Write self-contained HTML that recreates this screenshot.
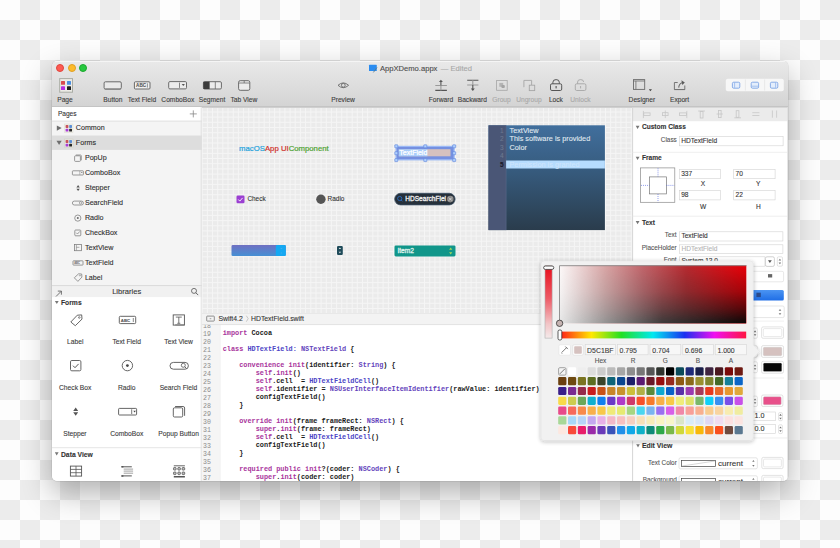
<!DOCTYPE html>
<html><head><meta charset="utf-8">
<style>
html,body{margin:0;padding:0}
body{width:840px;height:548px;overflow:hidden;position:relative;
 background:repeating-conic-gradient(#ececec 0 25%,#fdfdfd 0 50%) 0 0/40px 40px;
 font-family:"Liberation Sans",sans-serif;color:#222}
.a{position:absolute}
#win{position:absolute;left:52px;top:61px;width:736px;height:420px;border-radius:5px;overflow:hidden;
 background:#f2f2f2;box-shadow:0 12px 30px rgba(0,0,0,.3),0 0 0 .5px rgba(0,0,0,.12)}
#pg{left:-52px;top:-61px;width:840px;height:548px}
#tb{left:52px;top:61px;width:736px;height:45.5px;background:linear-gradient(#e9e9e9,#d4d4d4);border-bottom:1px solid #c4c4c4;box-sizing:border-box}
.tl{width:6.4px;height:6.4px;border-radius:50%}
#left{left:52px;top:106.5px;width:149.5px;height:375px;background:#f4f4f4;border-right:1px solid #d8d8d8;box-sizing:border-box}
#canvas{left:201.5px;top:106.5px;width:431px;height:206px;background-color:#ededed;
 background-image:linear-gradient(90deg,rgba(255,255,255,.75) 1px,transparent 1px),linear-gradient(rgba(255,255,255,.75) 1px,transparent 1px);
 background-size:5px 5px;background-position:1px 0}
#code{left:201.5px;top:312.5px;width:431px;height:169px;background:#fff}
#insp{left:632px;top:106.5px;width:156px;height:375px;background:#fff;border-left:1px solid #d4d4d4;box-sizing:border-box}
</style></head><body>
<div id="win"><div id="pg" class="a">
 <div id="tb" class="a"></div>
 <div class="a" style="left:52px;top:61px;width:736px;height:1px;background:rgba(255,255,255,.55)"></div>
 <div class="a tl" style="left:56.1px;top:63.9px;background:#fd5b53;border:.5px solid #e0443c"></div>
 <div class="a tl" style="left:67.5px;top:63.9px;background:#fdbb2c;border:.5px solid #dfa023"></div>
 <div class="a tl" style="left:78.9px;top:63.9px;background:#27c83f;border:.5px solid #1ca82f"></div>
 <svg class="a" style="left:0;top:0" width="840" height="110" viewBox="0 0 840 110">
  <g font-family="Liberation Sans" font-size="6.65" fill="#3c3c3c" text-anchor="middle">
   <text x="65" y="102" stroke="#3c3c3c" stroke-width=".1">Page</text>
   <text x="112.9" y="102" stroke="#3c3c3c" stroke-width=".1">Button</text>
   <text x="142" y="102" stroke="#3c3c3c" stroke-width=".1">Text Field</text>
   <text x="177.8" y="102" stroke="#3c3c3c" stroke-width=".1">ComboBox</text>
   <text x="212" y="102" stroke="#3c3c3c" stroke-width=".1">Segment</text>
   <text x="243.9" y="102" stroke="#3c3c3c" stroke-width=".1">Tab View</text>
   <text x="343.1" y="102" stroke="#3c3c3c" stroke-width=".1">Preview</text>
   <text x="441" y="102" stroke="#3c3c3c" stroke-width=".1">Forward</text>
   <text x="472.3" y="102" stroke="#3c3c3c" stroke-width=".1">Backward</text>
   <text x="501.5" y="102" fill="#a8a8a8" stroke="#a8a8a8" stroke-width=".1">Group</text>
   <text x="528.9" y="102" fill="#a8a8a8" stroke="#a8a8a8" stroke-width=".1">Ungroup</text>
   <text x="555.9" y="102" stroke="#3c3c3c" stroke-width=".1">Lock</text>
   <text x="580.4" y="102" fill="#a8a8a8" stroke="#a8a8a8" stroke-width=".1">Unlock</text>
   <text x="641.9" y="102" stroke="#3c3c3c" stroke-width=".1">Designer</text>
   <text x="679.6" y="102" stroke="#3c3c3c" stroke-width=".1">Export</text>
  </g>
  <g font-family="Liberation Sans" font-size="7.6" text-anchor="start">
   <text x="380" y="71.2" fill="#4a4a4a" stroke="#4a4a4a" stroke-width=".1">AppXDemo.appx</text><text x="440.8" y="71.2" fill="#a6a6a6" stroke="#a6a6a6" stroke-width=".1">— Edited</text>
  </g>
  <rect x="369" y="64.8" width="7.8" height="6.2" rx=".6" fill="#2a8cf0"/>
  <path d="M373.4 72.4 l3.6 -5" stroke="#5a7a8a" stroke-width=".9"/>
  <!-- page icon -->
  <rect x="59.7" y="78.6" width="12.8" height="13.6" fill="#ecebe6" stroke="#a9aca4" stroke-width="1"/>
  <rect x="61" y="81" width="4" height="3.8" rx=".6" fill="#d94a4e"/>
  <rect x="67" y="81" width="4" height="3.8" rx=".6" fill="#4a8ee0"/>
  <rect x="61" y="86.3" width="4" height="3.8" rx=".6" fill="#b42ee0"/>
  <rect x="67" y="86.3" width="4" height="3.8" rx=".6" fill="#1e1e1e"/>
  <g fill="none" stroke="#6a6a6a" stroke-width="1">
   <!-- button -->
   <rect x="104.1" y="81.8" width="17.2" height="7.2" rx="1.3" fill="#e9e9e9"/>
   <path d="M104.6 89.2 h16.2" stroke="#6a6a6a" stroke-width=".6"/>
   <!-- textfield -->
   <rect x="134.4" y="81.8" width="15.6" height="7.2" rx="1" fill="#f0f0f0"/>
   <path d="M147.4 83.3 v4.3" stroke-width=".7"/>
   <!-- combobox -->
   <rect x="168.7" y="81.6" width="17.8" height="7.3" rx="1.2" fill="#ececec"/>
   <path d="M179.5 82.6 v5.3" stroke-width=".8"/>
   <!-- segment -->
   <rect x="203.4" y="81.7" width="18" height="7.3" rx="1.2" fill="#ececec"/>
   <path d="M209.2 81.7 v7.3 M215.3 81.7 v7.3" stroke-width=".8"/>
   <!-- tab view -->
   <rect x="238.6" y="80.7" width="11.2" height="9.6" rx="1.6" fill="#ececec"/>
   <path d="M238.6 83 h11.2 M244.2 80.7 v2.3" stroke-width=".8"/>
   <!-- eye -->
   <path d="M338 85.3 q5.3 -4.8 10.6 0 q-5.3 4.8 -10.6 0z" stroke-width=".9"/>
   <circle cx="343.3" cy="85.3" r="1.9" stroke-width=".9"/>
   <!-- designer -->
   <rect x="633.5" y="79.6" width="11.2" height="9.8" stroke-width=".9"/>
   <path d="M633.5 81 h11.2 M635.9 81 v8.4" stroke-width=".8"/>
   <!-- export -->
   <path d="M677.7 82.5 h-3.3 v7.1 h10.4 v-4.1" stroke-width=".9"/><path d="M674.4 89.5 h10.4" stroke-width=".6"/>
   <path d="M678.7 87.6 q0.3 -3.9 3.4 -4.9" stroke-width="1.1"/><path d="M681.4 80.2 l3.4 2.2 l-2.5 2.6z" fill="#5a5a5a" stroke="none"/>
   <!-- lock -->
   <rect x="550.5" y="83.8" width="11.2" height="6.7" rx="1.4" stroke="#555" stroke-width="1"/>
   <path d="M552.9 83.8 v-1.6 q0 -2.6 3.2 -2.6 q3.2 0 3.2 2.6 v1.6" stroke="#555" stroke-width="1"/>
  </g>
  <path d="M556.1 86 v2.4" stroke="#444" stroke-width="1"/>
  <g fill="none" stroke="#a6a6a6" stroke-width=".9">
   <rect x="575.3" y="83.8" width="10.6" height="6.7" rx="1.4"/>
   <path d="M577.6 83.8 v-1.8 q0 -2.4 3 -2.4 q3 0 3 2.4"/>
   <rect x="496.6" y="80.4" width="10.6" height="9.9" stroke-width=".8"/>
   <rect x="499.3" y="82.9" width="3.9" height="3.9" fill="#b4b4b4" stroke="none"/>
   <rect x="501.4" y="85" width="3.4" height="3" rx="1" fill="#a4a4a4" stroke="none"/>
   <path d="M523.9 87.2 v-6.8 h7.7 v4.6"/>
   <rect x="529.3" y="85.2" width="5.4" height="5.4"/>
  </g>
  <path d="M580.6 86 v2.4" stroke="#a6a6a6" stroke-width=".9"/>
  <text x="136.1" y="87.4" font-family="Liberation Sans" font-weight="bold" font-size="4.6" fill="#555" stroke="#555" stroke-width=".1">ABC</text>
  <path d="M181.7 84 h3.2 l-1.6 2z" fill="#555"/>
  <rect x="203.4" y="81.7" width="6" height="7.3" fill="#3c3c3c"/>
  <path d="M648.8 89.3 h3.2 l-1.6 1.9z" fill="#444"/>
  <!-- forward/backward -->
  <g stroke-width="1.1" fill="none">
   <path d="M435.3 90.4 h11.6" stroke="#555"/>
   <path d="M435.3 85.5 h11.6" stroke="#9a9a9a"/>
   <path d="M440.9 81.5 v4" stroke="#555"/>
   <path d="M440.9 85.5 v4.9" stroke="#9a9a9a"/>
   <path d="M467.2 80.2 h11.2" stroke="#555"/>
   <path d="M467.2 85 h11.2" stroke="#9a9a9a"/>
   <path d="M472.8 80.2 v4.8" stroke="#9a9a9a"/>
   <path d="M472.8 85 v4" stroke="#555"/>
  </g>
  <path d="M438.9 82 l2 -2.3 l2 2.3z" fill="#555"/>
  <path d="M470.8 88.6 l2 2.3 l2 -2.3z" fill="#555"/>
  <!-- segmented -->
  <rect x="725.8" y="78.8" width="58" height="12.4" rx="2" fill="#f7f7f7"/>
  <path d="M745.4 79.5 v11 M764.6 79.5 v11" stroke="#e2e2e2" stroke-width=".7"/>
  <g fill="#e4eefc" stroke="#6e9ae2" stroke-width=".8">
   <rect x="732.4" y="82.2" width="7.4" height="6" rx="1.3"/>
   <rect x="751.2" y="82.2" width="7.4" height="6" rx="1.3"/>
   <rect x="770.4" y="82.2" width="7.4" height="6" rx="1.3"/>
  </g>
  <path d="M734.6 82.7 v5 M751.7 86.2 h6.4 M775.6 82.7 v5" stroke="#7aa2e4" stroke-width=".6"/>
 </svg>

 <svg class="a" style="left:52px;top:106.5px" width="150" height="375" viewBox="52 106.5 150 375">
  <rect x="52" y="106.5" width="150" height="14" fill="#ffffff"/>
  <rect x="52" y="120.3" width="150" height="165" fill="#f4f4f4"/>
  <path d="M52 120.6 h150" stroke="#dcdcdc" stroke-width=".8"/>
  <rect x="52" y="135" width="150" height="14.4" fill="#dddddd"/>
  <path d="M52 285.3 h150" stroke="#d2d2d2" stroke-width="1"/>
  <rect x="52" y="285.8" width="150" height="10.8" fill="#f1f1f1"/>
  <rect x="52" y="296.6" width="150" height="185" fill="#ffffff"/>
  <path d="M52 447.2 h150" stroke="#dedede" stroke-width=".8"/>
  <path d="M201.2 106.5 v375" stroke="#e0e0e0" stroke-width="1"/>
  <g font-family="Liberation Sans" font-size="6.6" fill="#333">
   <text x="57.9" y="115.8" stroke="#333" stroke-width=".1">Pages</text>
  </g>
  <path d="M189.8 113.4 h7 M193.3 109.9 v7" stroke="#888" stroke-width=".8"/>
  <g font-family="Liberation Sans" font-size="7.15" fill="#2e2e2e"><text x="75.8" y="129.35" stroke="#2e2e2e" stroke-width=".1">Common</text><text x="75.8" y="144.35" stroke="#2e2e2e" stroke-width=".1">Forms</text><text x="84.9" y="159.35" stroke="#2e2e2e" stroke-width=".1">PopUp</text><text x="84.9" y="174.35" stroke="#2e2e2e" stroke-width=".1">ComboBox</text><text x="84.9" y="189.35" stroke="#2e2e2e" stroke-width=".1">Stepper</text><text x="84.9" y="204.35" stroke="#2e2e2e" stroke-width=".1">SearchField</text><text x="84.9" y="219.35" stroke="#2e2e2e" stroke-width=".1">Radio</text><text x="84.9" y="234.35" stroke="#2e2e2e" stroke-width=".1">CheckBox</text><text x="84.9" y="249.35" stroke="#2e2e2e" stroke-width=".1">TextView</text><text x="84.9" y="264.35" stroke="#2e2e2e" stroke-width=".1">TextField</text><text x="84.9" y="279.35" stroke="#2e2e2e" stroke-width=".1">Label</text></g>
  <path d="M56.8 124.9 l4.9 2.7 l-4.9 2.7z" fill="#6e6e6e"/>
  <path d="M56.5 140.3 h5.2 l-2.6 4.1z" fill="#6e6e6e"/>
  <g>
   <rect x="64.5" y="123.5" width="8.5" height="8.6" fill="#f0efe8" stroke="#dcdcd0" stroke-width=".5"/>
   <rect x="65.6" y="124.6" width="2.8" height="2.8" rx=".6" fill="#c8565c"/>
   <rect x="69.2" y="124.6" width="2.8" height="2.8" rx=".6" fill="#5a8ed6"/>
   <rect x="65.6" y="128.3" width="2.8" height="2.8" rx=".6" fill="#a83cd8"/>
   <rect x="69.2" y="128.3" width="2.8" height="2.8" rx=".6" fill="#262626"/>
   <rect x="64.5" y="138.5" width="8.5" height="8.6" fill="#e6e6e0" stroke="#cfcfc4" stroke-width=".5"/>
   <rect x="65.6" y="139.6" width="2.8" height="2.8" rx=".6" fill="#c8565c"/>
   <rect x="69.2" y="139.6" width="2.8" height="2.8" rx=".6" fill="#5a8ed6"/>
   <rect x="65.6" y="143.3" width="2.8" height="2.8" rx=".6" fill="#a83cd8"/>
   <rect x="69.2" y="143.3" width="2.8" height="2.8" rx=".6" fill="#262626"/>
  </g>
  <g fill="none" stroke="#7a7a7a" stroke-width=".75">
   <!-- popup -->
   <rect x="74.6" y="155.3" width="5.8" height="5.6" rx=".8"/>
   <path d="M75.8 154.5 h4.6 q.9 0 .9 .9 v4.4"/>
   <!-- combobox -->
   <rect x="72.4" y="170.3" width="11" height="4.2" rx=".6"/>
   <path d="M79.8 170.5 v3.8" stroke-width=".5"/>
   <!-- searchfield -->
   <rect x="72.4" y="200.6" width="11" height="3.9" rx="1.9"/>
   <circle cx="80.6" cy="202.4" r="1.2" stroke-width=".6"/>
   <!-- radio -->
   <circle cx="77.8" cy="217.6" r="3.1"/>
   <!-- checkbox -->
   <rect x="74.8" y="229.5" width="6" height="5.8" rx=".8"/>
   <path d="M76.2 232.2 l1.3 1.3 l2.3 -2.6" stroke-width=".7"/>
   <!-- textview -->
   <rect x="74.5" y="244" width="6.9" height="6.2"/>
   <path d="M76.4 244.5 v5.4 M76.4 246.8 h3" stroke-width=".6"/>
   <!-- textfield -->
   <rect x="73" y="260.3" width="10" height="4.3" rx=".5"/>
   <!-- label -->
   <path d="M74.3 277.3 l4.3 -4 l3.1 .2 l.2 3.1 l-4 4.3z"/>
   <circle cx="79.9" cy="275" r=".6" stroke-width=".5"/>
  </g>
  <path d="M81 171.6 h1.6 l-.8 1z" fill="#555"/>
  <path d="M76.4 186.9 l1.7 -2.3 l1.7 2.3z M76.4 188.3 l1.7 2.3 l1.7 -2.3z" fill="#555"/>
  <circle cx="77.8" cy="217.6" r="1" fill="#666"/>
  <text x="74.2" y="263.8" font-family="Liberation Sans" font-weight="bold" font-size="2.6" fill="#777" stroke="#777" stroke-width=".1">ABC</text>
  <!-- libraries header -->
  <path d="M56 296 l5.2 -5.2 M57.8 290.6 h3.6 v3.6" fill="none" stroke="#555" stroke-width=".8"/>
  <text x="126.7" y="293.4" font-family="Liberation Sans" font-size="7.6" fill="#333" text-anchor="middle" stroke="#333" stroke-width=".1">Libraries</text>
  <circle cx="194" cy="290.4" r="2.5" fill="none" stroke="#555" stroke-width=".8"/>
  <path d="M195.8 292.2 l2.4 2.4" stroke="#555" stroke-width=".9"/>
  <!-- forms section -->
  <path d="M54.9 300.4 h3.8 l-1.9 3.2z" fill="#777"/>
  <text x="61" y="304.8" font-family="Liberation Sans" font-weight="bold" font-size="6.75" fill="#333" stroke="#333" stroke-width=".1">Forms</text>
  <path d="M54.8 451.8 h3.8 l-1.9 3.2z" fill="#777"/>
  <text x="61" y="456.3" font-family="Liberation Sans" font-weight="bold" font-size="6.75" fill="#333" stroke="#333" stroke-width=".1">Data View</text>
  <g font-family="Liberation Sans" font-size="6.7" fill="#3a3a3a" text-anchor="middle">
   <text x="75.2" y="343.30" stroke="#3a3a3a" stroke-width=".1">Label</text><text x="126.7" y="343.3" stroke="#3a3a3a" stroke-width=".1">Text Field</text><text x="178.6" y="343.3" stroke="#3a3a3a" stroke-width=".1">Text View</text>
   <text x="75.2" y="389.5" stroke="#3a3a3a" stroke-width=".1">Check Box</text><text x="126.7" y="389.50" stroke="#3a3a3a" stroke-width=".1">Radio</text><text x="178.4" y="389.5" stroke="#3a3a3a" stroke-width=".1">Search Field</text>
   <text x="74.9" y="435.40" stroke="#3a3a3a" stroke-width=".1">Stepper</text><text x="126.8" y="435.40" stroke="#3a3a3a" stroke-width=".1">ComboBox</text><text x="178.6" y="435.4" stroke="#3a3a3a" stroke-width=".1">Popup Button</text>
  </g>
  <g fill="none" stroke="#555" stroke-width=".9">
   <!-- label tag -->
   <path d="M70.8 321.5 l6.5 -6.8 l4.4 -.3 l.3 4.2 l-6.7 6.6z" stroke-linejoin="round"/>
   <circle cx="79.3" cy="317" r=".8" stroke-width=".7"/>
   <!-- text field -->
   <rect x="119.3" y="315.8" width="16.4" height="7.3" rx="1"/>
   <path d="M133.3 317.5 v4" stroke-width=".7"/>
   <!-- text view -->
   <rect x="173.2" y="314.4" width="11.2" height="10.2"/>
   <path d="M175.8 316.6 h6 M178.8 316.6 v6.2 M177.3 322.8 h3" stroke-width=".8"/>
   <path d="M175.2 324.3 h9" stroke-width=".6"/>
   <!-- checkbox -->
   <rect x="70.5" y="360" width="10.4" height="10.3" rx="1.3"/>
   <path d="M73 365.2 l2 2 l3.6 -3.8" stroke-width="1"/>
   <!-- radio -->
   <circle cx="127.4" cy="365.1" r="5.2"/>
   <!-- search field -->
   <rect x="170" y="361.9" width="18.4" height="6.8" rx="3.4"/>
   <circle cx="183.3" cy="364.8" r="2" stroke-width=".8"/>
   <path d="M184.7 366.2 l1.8 1.8" stroke-width=".9"/>
   <!-- combobox -->
   <rect x="118.6" y="407.9" width="18" height="6.6" rx=".8"/>
   <path d="M131.7 408.8 v4.8" stroke-width=".8"/>
   <!-- popup button -->
   <rect x="173.3" y="407.3" width="9.4" height="9.2" rx="1.2"/>
   <path d="M175.1 406 h8 q1.5 0 1.5 1.5 v7.8" />
   <!-- table -->
   <rect x="70.4" y="465.6" width="11.2" height="10"/>
   <path d="M70.4 468.9 h11.2 M70.4 472.2 h11.2 M76 465.6 v10" stroke-width=".8"/>
  </g>
  <text x="120.8" y="321.6" font-family="Liberation Sans" font-weight="bold" font-size="4.3" fill="#555" stroke="#555" stroke-width=".1">ABC</text>
  <circle cx="127.4" cy="365.1" r="1.4" fill="#444"/>
  <path d="M133.3 410.3 h2.6 l-1.3 1.7z" fill="#444"/>
  <path d="M73.2 410.6 l2.5 -3.5 l2.5 3.5z M73.2 411.8 l2.5 3.5 l2.5 -3.5z" fill="#555"/>
  <g stroke="#555" stroke-width=".9" fill="none">
   <path d="M121.6 466.3 h10.2 M121.6 475.4 h10.2" stroke-width="1"/><path d="M123.7 468.6 h9.4 M123.7 470.6 h9.4 M123.7 472.7 h9.4" stroke="#8a8a8a" stroke-width=".8"/><path d="M121.4 466.3 h2 M121.4 475.4 h2" stroke-width="1.5"/>
   <path d="M173.8 465.3 h11.1"/><path d="M173.8 476.2 h11.1" stroke-width="1.6"/>
  </g>
  <g fill="#bbb" stroke="#444" stroke-width=".7">
   <rect x="173.5" y="467" width="2.6" height="2.6" rx=".8"/><rect x="177.8" y="467" width="2.6" height="2.6" rx=".8"/><rect x="182.1" y="467" width="2.6" height="2.6" rx=".8"/>
   <rect x="173.5" y="471.5" width="2.6" height="2.6" rx=".8"/><rect x="177.8" y="471.5" width="2.6" height="2.6" rx=".8"/><rect x="182.1" y="471.5" width="2.6" height="2.6" rx=".8"/>
  </g>
 </svg>

 <svg class="a" style="left:201.5px;top:106.5px" width="431" height="206" viewBox="201.5 106.5 431 206">
  <rect x="201.5" y="106.5" width="431" height="206" fill="#ebebeb"/>
  <path d="M201.70 106.5v206M206.87 106.5v206M212.04 106.5v206M217.21 106.5v206M222.38 106.5v206M227.55 106.5v206M232.72 106.5v206M237.89 106.5v206M243.06 106.5v206M248.23 106.5v206M253.40 106.5v206M258.57 106.5v206M263.74 106.5v206M268.91 106.5v206M274.08 106.5v206M279.25 106.5v206M284.42 106.5v206M289.59 106.5v206M294.76 106.5v206M299.93 106.5v206M305.10 106.5v206M310.27 106.5v206M315.44 106.5v206M320.61 106.5v206M325.78 106.5v206M330.95 106.5v206M336.12 106.5v206M341.29 106.5v206M346.46 106.5v206M351.63 106.5v206M356.80 106.5v206M361.97 106.5v206M367.14 106.5v206M372.31 106.5v206M377.48 106.5v206M382.65 106.5v206M387.82 106.5v206M392.99 106.5v206M398.16 106.5v206M403.33 106.5v206M408.50 106.5v206M413.67 106.5v206M418.84 106.5v206M424.01 106.5v206M429.18 106.5v206M434.35 106.5v206M439.52 106.5v206M444.69 106.5v206M449.86 106.5v206M455.03 106.5v206M460.20 106.5v206M465.37 106.5v206M470.54 106.5v206M475.71 106.5v206M480.88 106.5v206M486.05 106.5v206M491.22 106.5v206M496.39 106.5v206M501.56 106.5v206M506.73 106.5v206M511.90 106.5v206M517.07 106.5v206M522.24 106.5v206M527.41 106.5v206M532.58 106.5v206M537.75 106.5v206M542.92 106.5v206M548.09 106.5v206M553.26 106.5v206M558.43 106.5v206M563.60 106.5v206M568.77 106.5v206M573.94 106.5v206M579.11 106.5v206M584.28 106.5v206M589.45 106.5v206M594.62 106.5v206M599.79 106.5v206M604.96 106.5v206M610.13 106.5v206M615.30 106.5v206M620.47 106.5v206M625.64 106.5v206M630.81 106.5v206M201.5 111.50h431M201.5 116.67h431M201.5 121.84h431M201.5 127.01h431M201.5 132.18h431M201.5 137.35h431M201.5 142.52h431M201.5 147.69h431M201.5 152.86h431M201.5 158.03h431M201.5 163.20h431M201.5 168.37h431M201.5 173.54h431M201.5 178.71h431M201.5 183.88h431M201.5 189.05h431M201.5 194.22h431M201.5 199.39h431M201.5 204.56h431M201.5 209.73h431M201.5 214.90h431M201.5 220.07h431M201.5 225.24h431M201.5 230.41h431M201.5 235.58h431M201.5 240.75h431M201.5 245.92h431M201.5 251.09h431M201.5 256.26h431M201.5 261.43h431M201.5 266.60h431M201.5 271.77h431M201.5 276.94h431M201.5 282.11h431M201.5 287.28h431M201.5 292.45h431M201.5 297.62h431M201.5 302.79h431M201.5 307.96h431" stroke="#f5f5f5" stroke-width="1"/>
  <path d="M201.5 107 h431" stroke="#d0d0d0" stroke-width="1"/>
  <g font-family="Liberation Sans" font-size="7.75">
   <text x="238.6" y="150.9"><tspan fill="#1fa2dc" stroke="#1fa2dc" stroke-width=".2">macOS</tspan><tspan fill="#d0302c" stroke="#d0302c" stroke-width=".2">App UI</tspan><tspan fill="#4ea232" stroke="#4ea232" stroke-width=".2">Component</tspan></text>
  </g>
  <!-- textfield selected -->
  <g transform="translate(0,-.5)">
  <rect x="395.6" y="146.4" width="58" height="13.4" fill="#7590e0" stroke="#9ab8f6" stroke-width="1.2"/>
  <rect x="398.3" y="149.2" width="51.7" height="7.1" fill="#d5c1bf"/>
  <rect x="398.3" y="149.2" width="28.6" height="7.1" fill="#a9cdfb"/>
  <text x="398.8" y="155.3" font-family="Liberation Sans" font-size="7" fill="#ffffff" stroke="#ffffff" stroke-width=".25">TextField</text>
  <g fill="#b0d0fc" stroke="#5a82dc" stroke-width=".6">
   <rect x="394.3" y="144.8" width="3" height="3" rx=".4"/><rect x="423.3" y="144.8" width="3" height="3" rx=".4"/><rect x="452.2" y="144.8" width="3" height="3" rx=".4"/>
   <rect x="394.3" y="151.7" width="3" height="3" rx=".4"/><rect x="452.2" y="151.7" width="3" height="3" rx=".4"/>
   <rect x="394.3" y="158.6" width="3" height="3" rx=".4"/><rect x="423.3" y="158.6" width="3" height="3" rx=".4"/><rect x="452.2" y="158.6" width="3" height="3" rx=".4"/>
  </g>
  </g>
  <!-- check -->
  <rect x="236" y="195.1" width="8" height="7.6" rx="1.2" fill="#9b3fd2"/>
  <path d="M237.8 199 l1.5 1.6 l2.8 -3.2" fill="none" stroke="#fff" stroke-width=".9"/>
  <text x="246.9" y="200.2" font-family="Liberation Sans" font-size="6.45" fill="#333" stroke="#333" stroke-width=".1">Check</text>
  <circle cx="320.4" cy="198.7" r="4.7" fill="#555555"/>
  <text x="327.1" y="200.3" font-family="Liberation Sans" font-size="6.45" fill="#333" stroke="#333" stroke-width=".1">Radio</text>
  <!-- search -->
  <rect x="394.2" y="192.8" width="60.4" height="11.6" rx="5.8" fill="#26303a" stroke="#3a4f63" stroke-width=".8"/>
  <circle cx="399.2" cy="198" r="2.1" fill="none" stroke="#2a6cc0" stroke-width=".9"/>
  <path d="M400.6 199.5 l1.3 1.3" stroke="#2a6cc0" stroke-width=".9"/>
  <text x="404.8" y="200.9" font-family="Liberation Sans" font-size="6.55" fill="#f0f0f0" stroke="#f0f0f0" stroke-width=".3">HDSearchFiel</text>
  <circle cx="449.8" cy="198.6" r="3.3" fill="#8a8a8a"/>
  <path d="M448.3 197.1 l3 3 M451.3 197.1 l-3 3" stroke="#e8e8e8" stroke-width=".7"/>
  <!-- popup bar -->
  <defs><linearGradient id="pb" x1="0" y1="0" x2="0" y2="1"><stop offset="0" stop-color="#6e70c2"/><stop offset="1" stop-color="#4690d4"/></linearGradient></defs>
  <rect x="231" y="244.6" width="54.3" height="11" rx="1.3" fill="url(#pb)"/>
  <rect x="275.3" y="244.6" width="10" height="11" rx="1.3" fill="#14a8f2"/>
  <path d="M280.2 248 h1.5 M280.2 252.5 h1.5" stroke="#5fb0e8" stroke-width=".6"/>
  <!-- stepper -->
  <rect x="336.5" y="245.4" width="5.8" height="9" rx="1.2" fill="#1f4b5a"/>
  <path d="M338.2 248.5 l1.2 -1.4 l1.2 1.4z M338.2 251.3 l1.2 1.4 l1.2 -1.4z" fill="#dfe8ea"/>
  <!-- item2 -->
  <rect x="394" y="244.9" width="61" height="11" rx="1.3" fill="#11968a"/>
  <text x="396.9" y="252.6" font-family="Liberation Sans" font-size="6.6" fill="#e0f4ee" stroke="#e0f4ee" stroke-width=".3">Item2</text>
  <path d="M448.6 249.2 l1.6 -2.1 l1.6 2.1z M448.6 251.8 l1.6 2.1 l1.6 -2.1z" fill="#a6d85a"/>
  <!-- text view -->
  <defs><linearGradient id="tv" x1="0" y1="0" x2="0" y2="1"><stop offset="0" stop-color="#416f9d"/><stop offset=".45" stop-color="#365a7c"/><stop offset="1" stop-color="#2a3c4c"/></linearGradient></defs>
  <rect x="488" y="124.8" width="116.4" height="104.8" fill="url(#tv)"/>
  <rect x="488" y="124.8" width="17.6" height="104.8" fill="#4a5676"/>
  <path d="M505.6 124.8 v104.8" stroke="#5a6a8a" stroke-width=".6"/>
  <rect x="505.6" y="160" width="98.8" height="8" fill="#b6dcfe"/>
  <g font-family="Liberation Sans" font-size="7.3" fill="#e4eaf0">
   <text x="509" y="132.2" stroke="#dde6ef" stroke-width=".1">TextView</text>
   <text x="509" y="140.7" stroke="#dde6ef" stroke-width=".1">This software is provided</text>
   <text x="509" y="149.2" stroke="#dde6ef" stroke-width=".1">Color</text>
   <text x="509" y="166.5" fill="#cfe5fc" stroke="#cfe5fc" stroke-width=".1">Permission is granted</text>
  </g>
  <g font-family="Liberation Sans" font-size="6.5" fill="#6c7890" text-anchor="end">
   <text x="503" y="132.2" stroke="#6c7890" stroke-width=".1">1</text><text x="503" y="140.7" stroke="#6c7890" stroke-width=".1">2</text><text x="503" y="149.2" stroke="#6c7890" stroke-width=".1">3</text><text x="503" y="157.7" stroke="#6c7890" stroke-width=".1">4</text>
   <text x="503" y="166.5" fill="#1a1a2a" font-weight="bold" stroke="#1a1a2a" stroke-width=".1">5</text>
  </g>
 </svg>

 <svg class="a" style="left:201.5px;top:312.5px" width="431" height="169" viewBox="201.5 312.5 431 169">
  <rect x="201.5" y="312.5" width="431" height="169" fill="#ffffff"/>
  <rect x="201.5" y="324.5" width="18.3" height="157" fill="#f5f5f5"/>
  <path d="M219.8 324.5 v157" stroke="#ececec" stroke-width=".5"/>
    <g font-family="Liberation Mono" font-size="6.6" fill="#8c8c8c"><text x="202.6" y="327.5">18</text><text x="202.6" y="335.5">19</text><text x="202.6" y="343.5">20</text><text x="202.6" y="351.5">21</text><text x="202.6" y="359.5">22</text><text x="202.6" y="367.5">23</text><text x="202.6" y="375.5">24</text><text x="202.6" y="383.5">25</text><text x="202.6" y="391.5">26</text><text x="202.6" y="399.5">27</text><text x="202.6" y="407.5">28</text><text x="202.6" y="415.5">29</text><text x="202.6" y="423.5">30</text><text x="202.6" y="431.5">31</text><text x="202.6" y="439.5">32</text><text x="202.6" y="447.5">33</text><text x="202.6" y="455.5">34</text><text x="202.6" y="463.5">35</text><text x="202.6" y="471.5">36</text><text x="202.6" y="479.5">37</text></g>
  <g font-family="Liberation Mono" font-size="6.87" font-weight="bold" fill="#1c1c1c" style="white-space:pre" xml:space="preserve">
<text x="222.20" y="334.30"><tspan fill="#a8349c">import</tspan> Cocoa</text>
<text x="222.20" y="350.30"><tspan fill="#a8349c">class</tspan> <tspan fill="#4d46c6">HDTextField:</tspan> <tspan fill="#6444bc">NSTextField</tspan> {</text>
<text x="238.69" y="366.30"><tspan fill="#a8349c">convenience</tspan> <tspan fill="#a8349c">init</tspan>(identifier: <tspan fill="#6444bc">String</tspan>) {</text>
<text x="255.18" y="374.30"><tspan fill="#a8349c">self</tspan>.<tspan fill="#a8349c">init</tspan>()</text>
<text x="255.18" y="382.30"><tspan fill="#a8349c">self</tspan>.cell&#160;&#160;= <tspan fill="#4d46c6">HDTextFieldCell</tspan>()</text>
<text x="255.18" y="390.30"><tspan fill="#a8349c">self</tspan>.identifier = <tspan fill="#6444bc">NSUserInterfaceItemIdentifier</tspan>(rawValue: identifier)</text>
<text x="255.18" y="398.30">configTextField()</text>
<text x="238.69" y="406.30">}</text>
<text x="238.69" y="422.30"><tspan fill="#a8349c">override</tspan> <tspan fill="#a8349c">init</tspan>(frame frameRect: <tspan fill="#6444bc">NSRect</tspan>) {</text>
<text x="255.18" y="430.30"><tspan fill="#a8349c">super</tspan>.<tspan fill="#a8349c">init</tspan>(frame: frameRect)</text>
<text x="255.18" y="438.30"><tspan fill="#a8349c">self</tspan>.cell&#160;&#160;= <tspan fill="#4d46c6">HDTextFieldCell</tspan>()</text>
<text x="255.18" y="446.30">configTextField()</text>
<text x="238.69" y="454.30">}</text>
<text x="238.69" y="470.30"><tspan fill="#a8349c">required</tspan> <tspan fill="#a8349c">public</tspan> <tspan fill="#a8349c">init</tspan>?(coder: <tspan fill="#6444bc">NSCoder</tspan>) {</text>
<text x="255.18" y="478.30"><tspan fill="#a8349c">super</tspan>.<tspan fill="#a8349c">init</tspan>(coder: coder)</text>
  </g>
  <rect x="201.5" y="312.5" width="431" height="11.6" fill="#f3f3f3"/>
  <path d="M201.5 312.8 h431" stroke="#dadada" stroke-width=".6"/>
  <path d="M201.5 324.1 h431" stroke="#dcdcdc" stroke-width=".8"/>
  <rect x="206.2" y="315.6" width="7.6" height="5" rx=".6" fill="none" stroke="#666" stroke-width=".7"/>
  <path d="M209.2 318.2 h1.6" stroke="#666" stroke-width=".6"/>
  <g font-family="Liberation Sans" font-size="6.85" fill="#333">
   <text x="217.9" y="320.2" stroke="#333" stroke-width=".1">Swift4.2</text>
   <text x="250.5" y="320.2" stroke="#333" stroke-width=".1">HDTextField.swift</text>
  </g>
  <path d="M245.8 315.2 l1.9 3 l-1.9 3" fill="none" stroke="#aaa" stroke-width=".6"/>

 </svg>

 <svg class="a" style="left:632px;top:106.5px" width="156" height="375" viewBox="632 106.5 156 375">
  <rect x="632" y="106.5" width="156" height="375" fill="#fff"/>
  <rect x="632" y="106.5" width="156" height="14.2" fill="#ebebeb"/>
  <path d="M632 106.9 h156" stroke="#cfcfcf" stroke-width=".8"/>
  <path d="M632.6 106.5 v375" stroke="#d6d6d6" stroke-width="1"/>
  <path d="M787.6 106.5 v375" stroke="#dcdcdc" stroke-width=".8"/>
  <g stroke="#c6c6c6" stroke-width=".8" fill="none">
   <path d="M643.4 110.4 v7.2"/><rect x="643.8" y="112.4" width="6.3" height="2.6"/>
   <path d="M665.3 110 v7.6"/><rect x="662.5" y="112.2" width="5.6" height="2.9"/>
   <path d="M686.8 110.4 v7.2"/><rect x="679.6" y="112.4" width="6.8" height="2.6"/>
   <path d="M698.2 110.5 h6.7"/><rect x="700.2" y="110.9" width="2.8" height="6.6"/>
   <path d="M716.6 113.5 h6.2"/><rect x="718.4" y="109.9" width="2.7" height="7.2"/>
   <path d="M734.3 117.3 h6.7"/><rect x="736.2" y="110.2" width="2.7" height="6.6"/>
   <path d="M752.3 112.2 h7.1 M752.3 115 h7.1"/>
   <path d="M772.4 110 v7.2 M776.6 110 v7.2"/>
  </g>
  <g font-family="Liberation Sans" fill="#333">
   <path d="M635.7 125.3 h3.8 l-1.9 3.2z" fill="#777"/>
   <text x="641.9" y="128.90" font-size="6.6" font-weight="bold" stroke="#333" stroke-width=".1">Custom Class</text>
   <text x="676.8" y="141.40" font-size="6.4" fill="#555" text-anchor="end" stroke="#555" stroke-width=".1">Class</text>
   <rect x="679.3" y="136.10000000000002" width="103.80" height="9.20" fill="#fff" stroke="#d2d2d2" stroke-width=".6"/><text x="681.2" y="142.40" font-size="6.6" fill="#333" stroke="#333" stroke-width=".1">HDTextField</text>
   <path d="M632 151.8 h156" stroke="#e2e2e2" stroke-width=".6"/>
   <path d="M635.7 156.3 h3.8 l-1.9 3.2z" fill="#777"/>
   <text x="641.9" y="159.90" font-size="6.6" font-weight="bold" stroke="#333" stroke-width=".1">Frame</text>
   <rect x="640.6" y="167.4" width="34.2" height="34.4" fill="#fff" stroke="#8a8a8a" stroke-width=".7"/>
   <rect x="649.6" y="176.4" width="16.8" height="17" fill="#fff" stroke="#777" stroke-width=".7"/>
   <path d="M658 167.8 v8.5 M658 193.5 v8.3 M641 184.9 h8.5 M666.4 184.9 h8.2" stroke="#4a5ee0" stroke-width=".6" stroke-dasharray="1 1"/>
   <rect x="679.3" y="168.8" width="41.00" height="9.40" fill="#fff" stroke="#d2d2d2" stroke-width=".6"/><text x="681.2" y="175.20" font-size="6.6" fill="#333" stroke="#333" stroke-width=".1">337</text>
   <rect x="733.6999999999999" y="168.8" width="41.40" height="9.40" fill="#fff" stroke="#d2d2d2" stroke-width=".6"/><text x="735.6" y="175.20" font-size="6.6" fill="#333" stroke="#333" stroke-width=".1">70</text>
   <g font-size="6.6" text-anchor="middle"><text x="703" y="185.40" stroke="#333" stroke-width=".1">X</text><text x="758.3" y="185.40" stroke="#333" stroke-width=".1">Y</text>
   <text x="703" y="208.30" stroke="#333" stroke-width=".1">W</text><text x="758.3" y="208.30" stroke="#333" stroke-width=".1">H</text></g>
   <rect x="679.3" y="189.8" width="41.00" height="9.60" fill="#fff" stroke="#d2d2d2" stroke-width=".6"/><text x="681.2" y="196.30" font-size="6.6" fill="#333" stroke="#333" stroke-width=".1">98</text>
   <rect x="733.6999999999999" y="189.8" width="41.40" height="9.60" fill="#fff" stroke="#d2d2d2" stroke-width=".6"/><text x="735.6" y="196.30" font-size="6.6" fill="#333" stroke="#333" stroke-width=".1">22</text>
   <path d="M632 215.7 h156" stroke="#e2e2e2" stroke-width=".6"/>
   <path d="M635.7 220.6 h3.8 l-1.9 3.2z" fill="#777"/>
   <text x="641.9" y="224.30" font-size="6.6" font-weight="bold" stroke="#333" stroke-width=".1">Text</text>
   <text x="676.6" y="236.60" font-size="6.4" fill="#555" text-anchor="end" stroke="#555" stroke-width=".1">Text</text>
   <rect x="679.5" y="231.3" width="103.40" height="9.20" fill="#fff" stroke="#d2d2d2" stroke-width=".6"/><text x="681.4000000000001" y="237.60" font-size="6.6" fill="#333" stroke="#333" stroke-width=".1">TextField</text>
   <text x="676.6" y="249.10" font-size="6.4" fill="#555" text-anchor="end" stroke="#555" stroke-width=".1">PlaceHolder</text>
   <rect x="679.5" y="244.3" width="103.40" height="8.70" fill="#fff" stroke="#d2d2d2" stroke-width=".6"/><text x="681.4000000000001" y="250.35" font-size="6.6" fill="#b4b4b4" stroke="#b4b4b4" stroke-width=".1">HDTextField</text>
   <text x="676.6" y="261.80" font-size="6.4" fill="#555" text-anchor="end" stroke="#555" stroke-width=".1">Font</text>
   <rect x="679.5" y="256.3" width="85.5" height="9.40" fill="#fff" stroke="#d2d2d2" stroke-width=".6"/><text x="681.4000000000001" y="262.70" font-size="6.6" fill="#333" stroke="#333" stroke-width=".1">System 13.0</text>
   <rect x="765.4" y="256.3" width="9" height="9.6" rx="1.6" fill="#fff" stroke="#bdbdbd" stroke-width=".7"/>
   <path d="M768 259.8 h3.8 l-1.9 2.6z" fill="#555"/>
   <rect x="777.3" y="256.3" width="5.20" height="9.40" rx="1.2" fill="#fff" stroke="#d0d0d0" stroke-width=".6"/><path d="M778.6 260.0 l1.3 -1.8 l1.3 1.8z M778.6 262.0 l1.3 1.8 l1.3 -1.8z" fill="#777"/>
   <rect x="700" y="270.8" width="83.6" height="10.5" rx="1.5" fill="#fff" stroke="#d8d8d8" stroke-width=".6"/>
   <rect x="768" y="273.6" width="4.2" height="3.4" fill="#666"/>
   <defs><linearGradient id="bl" x1="0" y1="0" x2="0" y2="1"><stop offset="0" stop-color="#4b94f2"/><stop offset="1" stop-color="#1f6ee6"/></linearGradient></defs>
   <rect x="700" y="289.6" width="83.8" height="10.3" rx="1.5" fill="url(#bl)"/>
   <rect x="756.4" y="292.2" width="4.4" height="4.4" fill="#2a4a8a"/>
   <rect x="700" y="305.5" width="84.2" height="11.6" rx="1.5" fill="#fff" stroke="#d4d4d4" stroke-width=".6"/>
   <path d="M778.7 310.3 l1.3 -1.8 l1.3 1.8z M778.7 312.8 l1.3 1.8 l1.3 -1.8z" fill="#777"/>
   <path d="M700 320.6 h84" stroke="#e4e4e4" stroke-width=".6"/>
   <rect x="752.8" y="327.5" width="4.50" height="10.30" rx="1.2" fill="#fff" stroke="#d0d0d0" stroke-width=".6"/><path d="M753.75 331.65 l1.3 -1.8 l1.3 1.8z M753.75 333.65 l1.3 1.8 l1.3 -1.8z" fill="#777"/>
   <rect x="761.5999999999999" y="326.40000000000003" width="21.90" height="11.40" rx="1.5" fill="#fff" stroke="#d0d0d0" stroke-width=".6"/><rect x="763.3" y="328.1" width="18.50" height="8.00" rx="1.2" fill="#ffffff" stroke="#c8c8c8" stroke-width=".4"/>
   <rect x="752.8" y="345.3" width="4.50" height="11.40" rx="1.2" fill="#fff" stroke="#d0d0d0" stroke-width=".6"/><path d="M753.75 350.0 l1.3 -1.8 l1.3 1.8z M753.75 352.0 l1.3 1.8 l1.3 -1.8z" fill="#777"/>
   <rect x="761.5999999999999" y="345.1" width="21.90" height="11.80" rx="1.5" fill="#fff" stroke="#d0d0d0" stroke-width=".6"/><rect x="763.3" y="346.8" width="18.50" height="8.40" rx="1.2" fill="#d5c1bf" stroke="#c8c8c8" stroke-width=".4"/>
   <rect x="752.8" y="361.3" width="4.50" height="10.90" rx="1.2" fill="#fff" stroke="#d0d0d0" stroke-width=".6"/><path d="M753.75 365.75 l1.3 -1.8 l1.3 1.8z M753.75 367.75 l1.3 1.8 l1.3 -1.8z" fill="#777"/>
   <rect x="761.5999999999999" y="360.8" width="21.90" height="11.90" rx="1.5" fill="#fff" stroke="#d0d0d0" stroke-width=".6"/><rect x="763.3" y="362.5" width="18.50" height="8.50" rx="1.2" fill="#050505" stroke="#c8c8c8" stroke-width=".4"/>
   <path d="M700 377.5 h84" stroke="#e4e4e4" stroke-width=".6"/>
   <rect x="752.8" y="395.6" width="4.50" height="10.40" rx="1.2" fill="#fff" stroke="#d0d0d0" stroke-width=".6"/><path d="M753.75 399.8 l1.3 -1.8 l1.3 1.8z M753.75 401.8 l1.3 1.8 l1.3 -1.8z" fill="#777"/>
   <rect x="761.5999999999999" y="394.5" width="21.30" height="11.50" rx="1.5" fill="#fff" stroke="#d0d0d0" stroke-width=".6"/><rect x="763.3" y="396.2" width="17.90" height="8.10" rx="1.2" fill="#e8508a" stroke="#c8c8c8" stroke-width=".4"/>
   <rect x="740.3" y="411.5" width="35.00" height="8.70" fill="#fff" stroke="#d2d2d2" stroke-width=".6"/><text x="754.5" y="417.55" font-size="7.2" fill="#333" stroke="#333" stroke-width=".1">1.0</text>
   <rect x="778.5999999999999" y="412.1" width="3.80" height="8.10" rx="1.2" fill="#fff" stroke="#d0d0d0" stroke-width=".6"/><path d="M779.2 415.15 l1.3 -1.8 l1.3 1.8z M779.2 417.15 l1.3 1.8 l1.3 -1.8z" fill="#777"/>
   <rect x="740.3" y="424.1" width="35.00" height="9.00" fill="#fff" stroke="#d2d2d2" stroke-width=".6"/><text x="754.5" y="430.30" font-size="7.2" fill="#333" stroke="#333" stroke-width=".1">0.0</text>
   <rect x="778.5999999999999" y="424.3" width="3.80" height="8.80" rx="1.2" fill="#fff" stroke="#d0d0d0" stroke-width=".6"/><path d="M779.2 427.7 l1.3 -1.8 l1.3 1.8z M779.2 429.7 l1.3 1.8 l1.3 -1.8z" fill="#777"/>
   <path d="M632 437.5 h156" stroke="#e2e2e2" stroke-width=".6"/>
   <path d="M636.2 443.8 h3.6 l-1.8 3.2z" fill="#777"/>
   <text x="641.9" y="447.70" font-size="6.9" font-weight="bold" stroke="#333" stroke-width=".1">Edit View</text>
   <text x="676.8" y="464.00" font-size="6.4" fill="#555" text-anchor="end" stroke="#555" stroke-width=".1">Text Color</text>
   <rect x="679" y="457.3" width="78.4" height="11" rx="1.5" fill="#fff" stroke="#d4d4d4" stroke-width=".6"/>
   <rect x="681.4" y="460.1" width="34.2" height="5.8" fill="#fff" stroke="#444" stroke-width=".7"/>
   <path d="M682 465.5 l33 -5" stroke="#999" stroke-width=".4"/>
   <text x="718.1" y="465.60" font-size="8" fill="#333" stroke="#333" stroke-width=".1">current</text>
   <path d="M752.2 461.2 l1.2 -1.6 l1.2 1.6z M752.2 464.6 l1.2 1.6 l1.2 -1.6z" fill="#777"/>
   <rect x="761.8" y="456.90000000000003" width="21.30" height="11.20" rx="1.5" fill="#fff" stroke="#d0d0d0" stroke-width=".6"/><rect x="763.5" y="458.6" width="17.90" height="7.80" rx="1.2" fill="#ffffff" stroke="#c8c8c8" stroke-width=".4"/>
   <text x="676.8" y="481.00" font-size="6.4" fill="#555" text-anchor="end" stroke="#555" stroke-width=".1">Background</text>
   <rect x="679" y="475.3" width="78.4" height="11" rx="1.5" fill="#fff" stroke="#d4d4d4" stroke-width=".6"/>
   <rect x="681.4" y="478.1" width="34.2" height="5.8" fill="#fff" stroke="#444" stroke-width=".7"/>
   <text x="718.1" y="483.60" font-size="8" fill="#333" stroke="#333" stroke-width=".1">current</text>
   <path d="M752.2 479.2 l1.2 -1.6 l1.2 1.6z" fill="#777"/>
   <rect x="761.8" y="474.90000000000003" width="21.30" height="11.20" rx="1.5" fill="#fff" stroke="#d0d0d0" stroke-width=".6"/><rect x="763.5" y="476.6" width="17.90" height="7.80" rx="1.2" fill="#ffffff" stroke="#c8c8c8" stroke-width=".4"/>
  </g>
 </svg>

 <svg class="a" style="left:520px;top:240px" width="260" height="220" viewBox="520 240 260 220">
  <defs>
   <filter id="sh" x="-20%" y="-20%" width="140%" height="140%"><feGaussianBlur in="SourceAlpha" stdDeviation="2"/><feOffset dy="1.2"/><feComponentTransfer><feFuncA type="linear" slope=".3"/></feComponentTransfer><feMerge><feMergeNode/><feMergeNode in="SourceGraphic"/></feMerge></filter>
   <linearGradient id="bs" x1="0" y1="0" x2="0" y2="1"><stop offset="0" stop-color="#e80c1a"/><stop offset=".45" stop-color="#ee5a66"/><stop offset=".8" stop-color="#f2c4c6"/><stop offset="1" stop-color="#f4eaea"/></linearGradient>
   <linearGradient id="svt" x1="0" y1="0" x2="1" y2="0"><stop offset="0" stop-color="#fdfafa"/><stop offset=".25" stop-color="#d8a4a4"/><stop offset=".45" stop-color="#c2646a"/><stop offset=".68" stop-color="#b82a30"/><stop offset="1" stop-color="#ea0008"/></linearGradient>
   <linearGradient id="svb" x1="0" y1="0" x2="1" y2="0"><stop offset="0" stop-color="#e6e6e6"/><stop offset=".25" stop-color="#929292"/><stop offset=".55" stop-color="#3a3a3a"/><stop offset="1" stop-color="#060606"/></linearGradient>
   <linearGradient id="svm" x1="0" y1="0" x2="0" y2="1"><stop offset="0" stop-color="#fff" stop-opacity="0"/><stop offset=".45" stop-color="#fff" stop-opacity=".3"/><stop offset=".75" stop-color="#fff" stop-opacity=".65"/><stop offset="1" stop-color="#fff" stop-opacity="1"/></linearGradient>
   <mask id="svmask"><rect x="559.3" y="265.5" width="187" height="58" fill="url(#svm)"/></mask>
   <linearGradient id="hue" x1="0" y1="0" x2="1" y2="0">
    <stop offset="0" stop-color="#ff1a1a"/><stop offset=".17" stop-color="#ffe800"/><stop offset=".33" stop-color="#22e022"/><stop offset=".5" stop-color="#00e8f0"/><stop offset=".67" stop-color="#1a30f0"/><stop offset=".83" stop-color="#f010f0"/><stop offset="1" stop-color="#ff1440"/>
   </linearGradient>
  </defs>
  <g filter="url(#sh)">
   <path d="M544 260.9 h206.3 q3 0 3 3 v81 l6.6 6.5 l-6.6 6.6 v79.6 q0 3 -3 3 h-206.3 q-3 0 -3 -3 v-173.7 q0 -3 3 -3z" fill="#f1f1f1" stroke="#dcdcdc" stroke-width=".4"/>
  </g>
  <rect x="545" y="265.9" width="7.1" height="72.2" fill="url(#bs)" stroke="#b0b0b0" stroke-width=".6"/>
  <rect x="543.6" y="266" width="10.2" height="3.4" rx="1.7" fill="#fff" stroke="#333" stroke-width=".8"/>
  <rect x="559.3" y="265.5" width="187" height="58" fill="url(#svt)"/>
  <rect x="559.3" y="265.5" width="187" height="58" fill="url(#svb)" mask="url(#svmask)"/>
  <path d="M559.5 324 v-58.3 h187" fill="none" stroke="#7a7a7a" stroke-width=".8"/>
  <circle cx="559.6" cy="323.3" r="3.2" fill="#c6b4b2" stroke="#333" stroke-width=".8"/>
  <rect x="559.8" y="331.6" width="186.4" height="6.8" fill="url(#hue)"/>
  <rect x="558" y="330" width="3.8" height="10" rx="1.6" fill="#fff" stroke="#333" stroke-width=".8"/>
  <rect x="558.9" y="344.8" width="11.6" height="10.4" rx="1.4" fill="#fff" stroke="#dcdcdc" stroke-width=".5"/>
  <path d="M561.6 352.6 l5 -5 M565.3 346.5 l2.6 2.6 M562.3 353.2 l-0.6 0.6" stroke="#555" stroke-width=".8" fill="none"/>
  <rect x="572.8" y="344.8" width="10.4" height="10.4" rx="1.3" fill="#fff" stroke="#d4d4d4" stroke-width=".5"/>
  <rect x="574.2" y="346.2" width="7.6" height="7.6" rx=".8" fill="#d5c1bf"/>
  <g fill="#f7f7f7" stroke="#d6d6d6" stroke-width=".6">
   <rect x="585.2" y="344.6" width="30.4" height="10.2"/>
   <rect x="617.3" y="344.6" width="30.8" height="10.2"/>
   <rect x="650" y="344.6" width="30.8" height="10.2"/>
   <rect x="682.8" y="344.6" width="30.6" height="10.2"/>
   <rect x="715.2" y="344.6" width="31.3" height="10.2"/>
  </g>
  <g font-family="Liberation Sans" font-size="6.9" fill="#3a3a3a">
   <text x="587.1" y="352.6" stroke="#3a3a3a" stroke-width=".1">D5C1BF</text>
   <text x="619.6" y="352.6" stroke="#3a3a3a" stroke-width=".1">0.795</text>
   <text x="652.3" y="352.6" stroke="#3a3a3a" stroke-width=".1">0.704</text>
   <text x="685" y="352.6" stroke="#3a3a3a" stroke-width=".1">0.696</text>
   <text x="717.4" y="352.6" stroke="#3a3a3a" stroke-width=".1">1.000</text>
  </g>
  <g font-family="Liberation Sans" font-size="6.5" fill="#555" text-anchor="middle">
   <text x="600.6" y="363.1" stroke="#555" stroke-width=".1">Hex</text><text x="633" y="363.1" stroke="#555" stroke-width=".1">R</text><text x="665.4" y="363.1" stroke="#555" stroke-width=".1">G</text><text x="698" y="363.1" stroke="#555" stroke-width=".1">B</text><text x="730.8" y="363.1" stroke="#555" stroke-width=".1">A</text>
  </g>
  <rect x="558.60" y="367.70" width="7.4" height="7.4" rx="1.2" fill="#f4f4f4" stroke="#9a9a9a" stroke-width=".9"/><path d="M559.80 373.90 L564.80 368.90" stroke="#444" stroke-width=".7"/><rect x="568.00" y="367.30" width="8.2" height="8.2" rx="1.3" fill="#ffffff"/><rect x="577.80" y="367.30" width="8.2" height="8.2" rx="1.3" fill="#eeeeee"/><rect x="587.60" y="367.30" width="8.2" height="8.2" rx="1.3" fill="#dddddd"/><rect x="597.40" y="367.30" width="8.2" height="8.2" rx="1.3" fill="#cccccc"/><rect x="607.20" y="367.30" width="8.2" height="8.2" rx="1.3" fill="#bbbbbb"/><rect x="617.00" y="367.30" width="8.2" height="8.2" rx="1.3" fill="#a6a6a6"/><rect x="626.80" y="367.30" width="8.2" height="8.2" rx="1.3" fill="#8e8e8e"/><rect x="636.60" y="367.30" width="8.2" height="8.2" rx="1.3" fill="#777777"/><rect x="646.40" y="367.30" width="8.2" height="8.2" rx="1.3" fill="#555555"/><rect x="656.20" y="367.30" width="8.2" height="8.2" rx="1.3" fill="#2f332e"/><rect x="666.00" y="367.30" width="8.2" height="8.2" rx="1.3" fill="#000000"/><rect x="675.80" y="367.30" width="8.2" height="8.2" rx="1.3" fill="#0a4a5a"/><rect x="685.60" y="367.30" width="8.2" height="8.2" rx="1.3" fill="#1e2a78"/><rect x="695.40" y="367.30" width="8.2" height="8.2" rx="1.3" fill="#1a1e48"/><rect x="705.20" y="367.30" width="8.2" height="8.2" rx="1.3" fill="#3e2440"/><rect x="715.00" y="367.30" width="8.2" height="8.2" rx="1.3" fill="#4a1820"/><rect x="724.80" y="367.30" width="8.2" height="8.2" rx="1.3" fill="#7a0a0a"/><rect x="734.60" y="367.30" width="8.2" height="8.2" rx="1.3" fill="#6e1a12"/><rect x="558.20" y="377.10" width="8.2" height="8.2" rx="1.3" fill="#6b4010"/><rect x="568.00" y="377.10" width="8.2" height="8.2" rx="1.3" fill="#6e4a10"/><rect x="577.80" y="377.10" width="8.2" height="8.2" rx="1.3" fill="#7a7420"/><rect x="587.60" y="377.10" width="8.2" height="8.2" rx="1.3" fill="#5c6e22"/><rect x="597.40" y="377.10" width="8.2" height="8.2" rx="1.3" fill="#39442a"/><rect x="607.20" y="377.10" width="8.2" height="8.2" rx="1.3" fill="#0d6478"/><rect x="617.00" y="377.10" width="8.2" height="8.2" rx="1.3" fill="#0a4690"/><rect x="626.80" y="377.10" width="8.2" height="8.2" rx="1.3" fill="#1c1f6a"/><rect x="636.60" y="377.10" width="8.2" height="8.2" rx="1.3" fill="#5a1a72"/><rect x="646.40" y="377.10" width="8.2" height="8.2" rx="1.3" fill="#6a1828"/><rect x="656.20" y="377.10" width="8.2" height="8.2" rx="1.3" fill="#980e0e"/><rect x="666.00" y="377.10" width="8.2" height="8.2" rx="1.3" fill="#982a1e"/><rect x="675.80" y="377.10" width="8.2" height="8.2" rx="1.3" fill="#8e5a14"/><rect x="685.60" y="377.10" width="8.2" height="8.2" rx="1.3" fill="#8a6a1a"/><rect x="695.40" y="377.10" width="8.2" height="8.2" rx="1.3" fill="#9a9030"/><rect x="705.20" y="377.10" width="8.2" height="8.2" rx="1.3" fill="#7e8430"/><rect x="715.00" y="377.10" width="8.2" height="8.2" rx="1.3" fill="#446a2a"/><rect x="724.80" y="377.10" width="8.2" height="8.2" rx="1.3" fill="#14809a"/><rect x="734.60" y="377.10" width="8.2" height="8.2" rx="1.3" fill="#0a66c8"/><rect x="558.20" y="386.90" width="8.2" height="8.2" rx="1.3" fill="#3a1e8a"/><rect x="568.00" y="386.90" width="8.2" height="8.2" rx="1.3" fill="#7a2a92"/><rect x="577.80" y="386.90" width="8.2" height="8.2" rx="1.3" fill="#962a4a"/><rect x="587.60" y="386.90" width="8.2" height="8.2" rx="1.3" fill="#c81e1e"/><rect x="597.40" y="386.90" width="8.2" height="8.2" rx="1.3" fill="#c85218"/><rect x="607.20" y="386.90" width="8.2" height="8.2" rx="1.3" fill="#c8862a"/><rect x="617.00" y="386.90" width="8.2" height="8.2" rx="1.3" fill="#c8922c"/><rect x="626.80" y="386.90" width="8.2" height="8.2" rx="1.3" fill="#ccc03a"/><rect x="636.60" y="386.90" width="8.2" height="8.2" rx="1.3" fill="#b0b046"/><rect x="646.40" y="386.90" width="8.2" height="8.2" rx="1.3" fill="#5a8a3a"/><rect x="656.20" y="386.90" width="8.2" height="8.2" rx="1.3" fill="#10a8d0"/><rect x="666.00" y="386.90" width="8.2" height="8.2" rx="1.3" fill="#0a62c8"/><rect x="675.80" y="386.90" width="8.2" height="8.2" rx="1.3" fill="#5a30a8"/><rect x="685.60" y="386.90" width="8.2" height="8.2" rx="1.3" fill="#9a3ab0"/><rect x="695.40" y="386.90" width="8.2" height="8.2" rx="1.3" fill="#a83a5a"/><rect x="705.20" y="386.90" width="8.2" height="8.2" rx="1.3" fill="#e83a1e"/><rect x="715.00" y="386.90" width="8.2" height="8.2" rx="1.3" fill="#e8682a"/><rect x="724.80" y="386.90" width="8.2" height="8.2" rx="1.3" fill="#e8982e"/><rect x="734.60" y="386.90" width="8.2" height="8.2" rx="1.3" fill="#e0a83a"/><rect x="558.20" y="396.70" width="8.2" height="8.2" rx="1.3" fill="#f8da4a"/><rect x="568.00" y="396.70" width="8.2" height="8.2" rx="1.3" fill="#cccc50"/><rect x="577.80" y="396.70" width="8.2" height="8.2" rx="1.3" fill="#6aa85a"/><rect x="587.60" y="396.70" width="8.2" height="8.2" rx="1.3" fill="#10b0d0"/><rect x="597.40" y="396.70" width="8.2" height="8.2" rx="1.3" fill="#1080f0"/><rect x="607.20" y="396.70" width="8.2" height="8.2" rx="1.3" fill="#6a3ac8"/><rect x="617.00" y="396.70" width="8.2" height="8.2" rx="1.3" fill="#b03ac8"/><rect x="626.80" y="396.70" width="8.2" height="8.2" rx="1.3" fill="#d03a6a"/><rect x="636.60" y="396.70" width="8.2" height="8.2" rx="1.3" fill="#f8502a"/><rect x="646.40" y="396.70" width="8.2" height="8.2" rx="1.3" fill="#f87a2a"/><rect x="656.20" y="396.70" width="8.2" height="8.2" rx="1.3" fill="#f8b048"/><rect x="666.00" y="396.70" width="8.2" height="8.2" rx="1.3" fill="#f8c848"/><rect x="675.80" y="396.70" width="8.2" height="8.2" rx="1.3" fill="#f0ec7a"/><rect x="685.60" y="396.70" width="8.2" height="8.2" rx="1.3" fill="#e0e26a"/><rect x="695.40" y="396.70" width="8.2" height="8.2" rx="1.3" fill="#7ab86a"/><rect x="705.20" y="396.70" width="8.2" height="8.2" rx="1.3" fill="#10d0f8"/><rect x="715.00" y="396.70" width="8.2" height="8.2" rx="1.3" fill="#3a90f0"/><rect x="724.80" y="396.70" width="8.2" height="8.2" rx="1.3" fill="#7a50e8"/><rect x="734.60" y="396.70" width="8.2" height="8.2" rx="1.3" fill="#c850e8"/><rect x="558.20" y="406.50" width="8.2" height="8.2" rx="1.3" fill="#e84a8a"/><rect x="568.00" y="406.50" width="8.2" height="8.2" rx="1.3" fill="#f86a5a"/><rect x="577.80" y="406.50" width="8.2" height="8.2" rx="1.3" fill="#f88a4a"/><rect x="587.60" y="406.50" width="8.2" height="8.2" rx="1.3" fill="#f8b04a"/><rect x="597.40" y="406.50" width="8.2" height="8.2" rx="1.3" fill="#f8c84a"/><rect x="607.20" y="406.50" width="8.2" height="8.2" rx="1.3" fill="#f0ea78"/><rect x="617.00" y="406.50" width="8.2" height="8.2" rx="1.3" fill="#e6ea72"/><rect x="626.80" y="406.50" width="8.2" height="8.2" rx="1.3" fill="#a6d682"/><rect x="636.60" y="406.50" width="8.2" height="8.2" rx="1.3" fill="#4ad6f0"/><rect x="646.40" y="406.50" width="8.2" height="8.2" rx="1.3" fill="#7ab4f0"/><rect x="656.20" y="406.50" width="8.2" height="8.2" rx="1.3" fill="#9a70f0"/><rect x="666.00" y="406.50" width="8.2" height="8.2" rx="1.3" fill="#d860e8"/><rect x="675.80" y="406.50" width="8.2" height="8.2" rx="1.3" fill="#f088a8"/><rect x="685.60" y="406.50" width="8.2" height="8.2" rx="1.3" fill="#f8a098"/><rect x="695.40" y="406.50" width="8.2" height="8.2" rx="1.3" fill="#f8b090"/><rect x="705.20" y="406.50" width="8.2" height="8.2" rx="1.3" fill="#f8cc90"/><rect x="715.00" y="406.50" width="8.2" height="8.2" rx="1.3" fill="#f8d4a0"/><rect x="724.80" y="406.50" width="8.2" height="8.2" rx="1.3" fill="#f8ecb0"/><rect x="734.60" y="406.50" width="8.2" height="8.2" rx="1.3" fill="#f0eca0"/><rect x="558.20" y="416.30" width="8.2" height="8.2" rx="1.3" fill="#a8d898"/><rect x="568.00" y="416.30" width="8.2" height="8.2" rx="1.3" fill="#a8d8f8"/><rect x="577.80" y="416.30" width="8.2" height="8.2" rx="1.3" fill="#b6d4f8"/><rect x="587.60" y="416.30" width="8.2" height="8.2" rx="1.3" fill="#c4a8f0"/><rect x="597.40" y="416.30" width="8.2" height="8.2" rx="1.3" fill="#e8b0e8"/><rect x="607.20" y="416.30" width="8.2" height="8.2" rx="1.3" fill="#f4b8c8"/><rect x="617.00" y="416.30" width="8.2" height="8.2" rx="1.3" fill="#f8c0c0"/><rect x="626.80" y="416.30" width="8.2" height="8.2" rx="1.3" fill="#f8cfc0"/><rect x="636.60" y="416.30" width="8.2" height="8.2" rx="1.3" fill="#f8e0b8"/><rect x="646.40" y="416.30" width="8.2" height="8.2" rx="1.3" fill="#f8ecb8"/><rect x="656.20" y="416.30" width="8.2" height="8.2" rx="1.3" fill="#faf4c0"/><rect x="666.00" y="416.30" width="8.2" height="8.2" rx="1.3" fill="#f8f6c8"/><rect x="675.80" y="416.30" width="8.2" height="8.2" rx="1.3" fill="#dae6c8"/><rect x="685.60" y="416.30" width="8.2" height="8.2" rx="1.3" fill="#d8ecf8"/><rect x="695.40" y="416.30" width="8.2" height="8.2" rx="1.3" fill="#d8e6f8"/><rect x="705.20" y="416.30" width="8.2" height="8.2" rx="1.3" fill="#e0d8f4"/><rect x="715.00" y="416.30" width="8.2" height="8.2" rx="1.3" fill="#f0dcf0"/><rect x="724.80" y="416.30" width="8.2" height="8.2" rx="1.3" fill="#fce0e0"/><rect x="734.60" y="416.30" width="8.2" height="8.2" rx="1.3" fill="#fce4e0"/><rect x="558.20" y="426.10" width="8.2" height="8.2" rx="1.3" fill="#fde8e0"/><rect x="568.00" y="426.10" width="8.2" height="8.2" rx="1.3" fill="#f84a3a"/><rect x="577.80" y="426.10" width="8.2" height="8.2" rx="1.3" fill="#e81e6a"/><rect x="587.60" y="426.10" width="8.2" height="8.2" rx="1.3" fill="#9a2aa8"/><rect x="597.40" y="426.10" width="8.2" height="8.2" rx="1.3" fill="#6a3ab8"/><rect x="607.20" y="426.10" width="8.2" height="8.2" rx="1.3" fill="#3a52b8"/><rect x="617.00" y="426.10" width="8.2" height="8.2" rx="1.3" fill="#2290e8"/><rect x="626.80" y="426.10" width="8.2" height="8.2" rx="1.3" fill="#12a8e8"/><rect x="636.60" y="426.10" width="8.2" height="8.2" rx="1.3" fill="#10b0c8"/><rect x="646.40" y="426.10" width="8.2" height="8.2" rx="1.3" fill="#0e8a78"/><rect x="656.20" y="426.10" width="8.2" height="8.2" rx="1.3" fill="#2ea84a"/><rect x="666.00" y="426.10" width="8.2" height="8.2" rx="1.3" fill="#7ab84a"/><rect x="675.80" y="426.10" width="8.2" height="8.2" rx="1.3" fill="#d0d83a"/><rect x="685.60" y="426.10" width="8.2" height="8.2" rx="1.3" fill="#f8e03a"/><rect x="695.40" y="426.10" width="8.2" height="8.2" rx="1.3" fill="#f8b80a"/><rect x="705.20" y="426.10" width="8.2" height="8.2" rx="1.3" fill="#f8882a"/><rect x="715.00" y="426.10" width="8.2" height="8.2" rx="1.3" fill="#f8501e"/><rect x="724.80" y="426.10" width="8.2" height="8.2" rx="1.3" fill="#6e4a3e"/><rect x="734.60" y="426.10" width="8.2" height="8.2" rx="1.3" fill="#5a7890"/>
 </svg>
</div></div>
</body></html>
